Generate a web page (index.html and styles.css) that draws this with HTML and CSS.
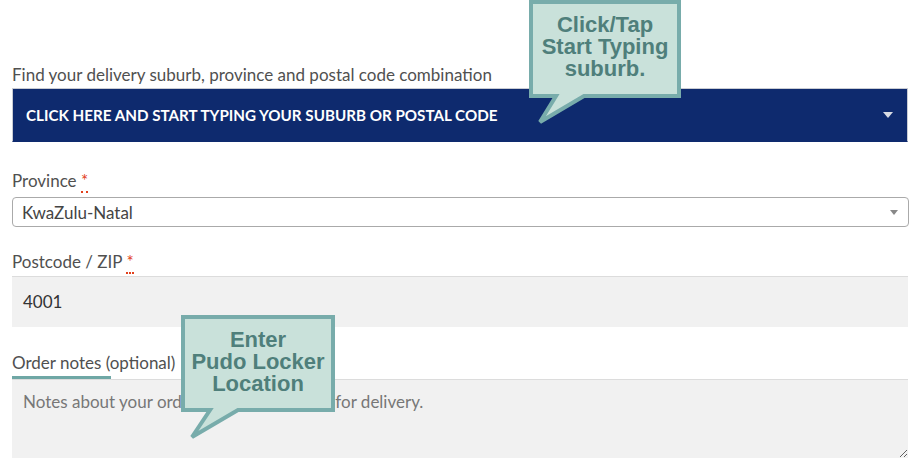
FILE: index.html
```html
<!DOCTYPE html>
<html lang="en">
<head>
<meta charset="utf-8">
<title>Checkout</title>
<link rel="stylesheet" href="styles.css">
</head>
<body>
<div class="wrap">
  <div class="hint">Find your delivery suburb, province and postal code combination</div>
  <div class="suburb-select">
    <span>CLICK HERE AND START TYPING YOUR SUBURB OR POSTAL CODE</span>
    <span class="caret caret-light"></span>
  </div>

  <div class="field field-province">
    <div class="label">Province <abbr class="req" title="required">*</abbr></div>
    <div class="select">
      <span>KwaZulu-Natal</span>
      <span class="caret caret-grey"></span>
    </div>
  </div>

  <div class="field field-postcode">
    <div class="label">Postcode / ZIP <abbr class="req" title="required">*</abbr></div>
    <div class="input">4001</div>
  </div>

  <div class="field field-notes">
    <div class="label">Order notes (optional)</div>
    <div class="accent"></div>
    <textarea class="notes">Notes about your order, e.g. special notes for delivery.</textarea>
  </div>
</div>

<div class="callout callout-top">
  <svg class="bubble-shape" width="170" height="130" viewBox="0 0 170 130">
    <polygon points="11,2 159,2 159,96 64,96 20,122 36,96 11,96" class="bubble"/>
  </svg>
  <div class="bubble-text">Click/Tap<br>Start Typing<br>suburb.</div>
</div>

<div class="callout callout-bottom">
  <svg class="bubble-shape" width="180" height="150" viewBox="0 0 180 150">
    <polygon points="13,17 163,17 163,110 68,110 22,137 40,110 13,110" class="bubble"/>
  </svg>
  <div class="bubble-text">Enter<br>Pudo Locker<br>Location</div>
</div>
</body>
</html>
```

FILE: styles.css
```css
html, body {
  margin: 0;
  padding: 0;
  background: #ffffff;
}

body {
  font-family: "Lato", "Liberation Sans", sans-serif;
  font-size: 17px;
  color: #505050;
  width: 915px;
  height: 475px;
  overflow: hidden;
  position: relative;
}

.wrap {
  padding: 64px 7px 0 12px;
}

.hint {
  line-height: 22px;
  height: 24px;
}

.suburb-select {
  box-sizing: border-box;
  height: 54px;
  background: #0e2a6e;
  border: 1px solid #c9ccd3;
  border-bottom-color: #0e2a6e;
  color: #ffffff;
  font-weight: 700;
  font-size: 15.2px;
  display: flex;
  align-items: center;
  justify-content: space-between;
  padding: 0 14px 0 13px;
}

.caret {
  width: 0;
  height: 0;
  border-left: 5px solid transparent;
  border-right: 5px solid transparent;
}

.caret-light {
  border-top: 6px solid #d8dbe3;
}

.caret-grey {
  border-left-width: 4px;
  border-right-width: 4px;
  border-top: 5px solid #888888;
}

.field-province {
  margin-top: 28px;
}

.field-postcode {
  margin-top: 24px;
}

.field-notes {
  margin-top: 25px;
}

.label {
  line-height: 22px;
  height: 24px;
}

.req {
  color: #e2401c;
  text-decoration: none;
  border-bottom: 2px dotted #e2401c;
  line-height: 1;
}

.field-province .label {
  margin-bottom: 3px;
}

.select {
  box-sizing: border-box;
  height: 30px;
  border: 1px solid #aaaaaa;
  border-radius: 4px;
  display: flex;
  align-items: center;
  justify-content: space-between;
  padding: 0 10px 0 9px;
  color: #444444;
  margin-right: -1px;
}

.field-postcode .label {
  margin-bottom: 1px;
}

.input {
  box-sizing: border-box;
  height: 51px;
  background: #f1f1f1;
  border-top: 1px solid #dcdcdc;
  padding: 0 11px 2px;
  display: flex;
  align-items: center;
  color: #333333;
}

.accent {
  width: 99px;
  height: 3px;
  background: #6fa7a5;
}

.notes {
  display: block;
  box-sizing: border-box;
  width: 100%;
  height: 79px;
  margin: 0;
  border: 0;
  border-top: 1px solid #dcdcdc;
  background: #f1f1f1;
  padding: 10px 11px;
  font-family: "Lato", "Liberation Sans", sans-serif;
  font-size: 17px;
  line-height: 24px;
  color: #777777;
  resize: vertical;
  outline: none;
}

.callout {
  position: absolute;
}

.callout-top {
  left: 520px;
  top: 0;
  width: 170px;
  height: 130px;
}

.callout-bottom {
  left: 170px;
  top: 300px;
  width: 180px;
  height: 150px;
}

.bubble-shape {
  position: absolute;
  left: 0;
  top: 0;
}

.bubble {
  fill: #c9e1da;
  stroke: #78acab;
  stroke-width: 4;
  stroke-linejoin: miter;
}

.bubble-text {
  position: relative;
  font-family: "Liberation Sans", Arial, sans-serif;
  font-weight: 700;
  font-size: 22px;
  line-height: 22px;
  color: #4f7f7b;
  text-align: center;
}

.callout-top .bubble-text {
  padding-top: 14px;
}

.callout-bottom .bubble-text {
  padding-top: 29px;
  width: 176px;
}
```
